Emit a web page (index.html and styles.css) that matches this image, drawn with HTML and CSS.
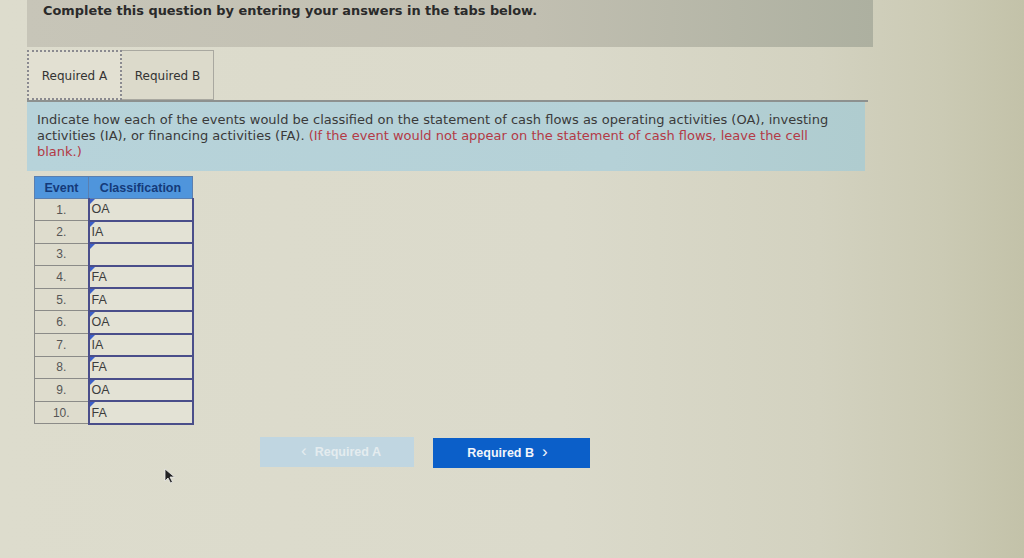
FILE: index.html
```html
<!DOCTYPE html>
<html>
<head>
<meta charset="utf-8">
<link rel="stylesheet" href="styles.css">
</head>
<body>
<div class="page">
  <div class="banner">Complete this question by entering your answers in the tabs below.</div>
  <div class="tabs">
    <div class="tab tab-active">Required A</div>
    <div class="tab tab-other">Required B</div>
  </div>
  <div class="tabline"></div>
  <div class="instructions">
    Indicate how each of the events would be classified on the statement of cash flows as operating activities (OA), investing activities (IA), or financing activities (FA). <span class="red">(If the event would not appear on the statement of cash flows, leave the cell blank.)</span>
  </div>
  <table class="grid">
    <thead>
      <tr><th class="c-event">Event</th><th class="c-class">Classification</th></tr>
    </thead>
    <tbody>
      <tr><td class="num">1.</td><td class="inp">OA</td></tr>
      <tr><td class="num">2.</td><td class="inp">IA</td></tr>
      <tr><td class="num">3.</td><td class="inp"></td></tr>
      <tr><td class="num">4.</td><td class="inp">FA</td></tr>
      <tr><td class="num">5.</td><td class="inp">FA</td></tr>
      <tr><td class="num">6.</td><td class="inp">OA</td></tr>
      <tr><td class="num">7.</td><td class="inp">IA</td></tr>
      <tr><td class="num">8.</td><td class="inp">FA</td></tr>
      <tr><td class="num">9.</td><td class="inp">OA</td></tr>
      <tr><td class="num">10.</td><td class="inp">FA</td></tr>
    </tbody>
  </table>
  <div class="nav">
    <div class="btn btn-prev"><span class="chev">&lsaquo;</span> Required A</div>
    <div class="btn btn-next">Required B <span class="chev">&rsaquo;</span></div>
  </div>
  <div class="cursor-row">
    <svg class="cursor" width="12" height="16" viewBox="0 0 12 16"><path d="M1 1 L1 13 L4 10 L6.5 15 L8.5 14 L6 9 L10.5 9 Z" fill="#222" stroke="#eee" stroke-width="0.8"/></svg>
  </div>
</div>
</body>
</html>
```
FILE: styles.css
```css
html, body {
  margin: 0;
  padding: 0;
}
body {
  width: 1024px;
  height: 558px;
  overflow: hidden;
  background: linear-gradient(90deg, #dddccd 0%, #dbdacb 55%, #d3d2c0 80%, #cbcab4 92%, #c3c2a9 100%);
  font-family: "DejaVu Sans", Verdana, sans-serif;
}
.page {
  padding-left: 27px;
}
.banner {
  width: 846px;
  height: 47px;
  box-sizing: border-box;
  padding: 3px 0 0 16px;
  background: linear-gradient(90deg, #c7c5b8 0%, #c1bfb1 60%, #adb0a0 100%);
  font-weight: bold;
  font-size: 12.9px;
  color: #2a2a2a;
}
.tabs {
  display: flex;
  margin-top: 3px;
  height: 50px;
}
.tab {
  box-sizing: border-box;
  height: 50px;
  display: flex;
  align-items: center;
  justify-content: center;
  padding-top: 2px;
  font-size: 12px;
  color: #333;
}
.tab-active {
  width: 95px;
  border: 2px dotted #8a8a90;
  background: #e2e0d2;
}
.tab-other {
  width: 92px;
  border: 1px solid #a9a8a0;
  border-left: none;
  background: #dcdacb;
}
.tabline {
  width: 841px;
  height: 2px;
  background: #8d918f;
}
.instructions {
  width: 838px;
  height: 69px;
  box-sizing: border-box;
  padding: 10px 30px 0 10px;
  background: linear-gradient(90deg, #b7d3da 0%, #b5d1d7 70%, #afcccf 100%);
  font-size: 13px;
  line-height: 16px;
  color: #3a3a3a;
}
.red {
  color: #b33a46;
}
.grid {
  margin: 5px 0 0 7px;
  border-collapse: collapse;
  font-family: "Liberation Sans", Arial, sans-serif;
  font-size: 12px;
}
.grid th {
  background: #4f95dc;
  color: #143a7a;
  font-weight: bold;
  font-size: 12.5px;
  height: 21px;
  padding: 0;
  border: 1px solid #5a7fb0;
}
.c-event { width: 53px; }
.c-class { width: 103px; }
.grid td {
  height: 20.6px;
  padding: 0;
  border: 1px solid #8b8b88;
}
.num {
  text-align: center;
  color: #555;
  background: #dedccd;
}
.inp {
  position: relative;
  border-left: 2px solid #4a4e8a !important;
  border-right: 2px solid #4a4e8a !important;
  border-bottom: 2px solid #4a4e8a !important;
  background: #e3e2d5;
  color: #3c3c3c;
  padding-left: 2px !important;
  font-size: 12.5px;
}
.inp::before {
  content: "";
  position: absolute;
  left: 0;
  top: 0;
  border-top: 5px solid #3c5ec8;
  border-right: 5px solid transparent;
}
.nav {
  display: flex;
  gap: 19px;
  margin: 12px 0 0 233px;
  font-family: "Liberation Sans", Arial, sans-serif;
  font-weight: bold;
  font-size: 12.5px;
}
.btn {
  height: 30px;
  display: flex;
  align-items: center;
  justify-content: center;
  box-sizing: border-box;
}
.btn-prev {
  width: 154px;
  background: #c0d6e1;
  color: #e4ecef;
}
.btn-next {
  width: 157px;
  margin-top: 1px;
  background: #0b5fc9;
  color: #f2f5fb;
}
.chev {
  font-size: 17px;
  font-weight: normal;
  margin: 0 8px;
  position: relative;
  top: -1px;
}
.cursor-row {
  margin: 0 0 0 137px;
  height: 20px;
}
.cursor {
  display: block;
  margin-top: 0;
}
```
